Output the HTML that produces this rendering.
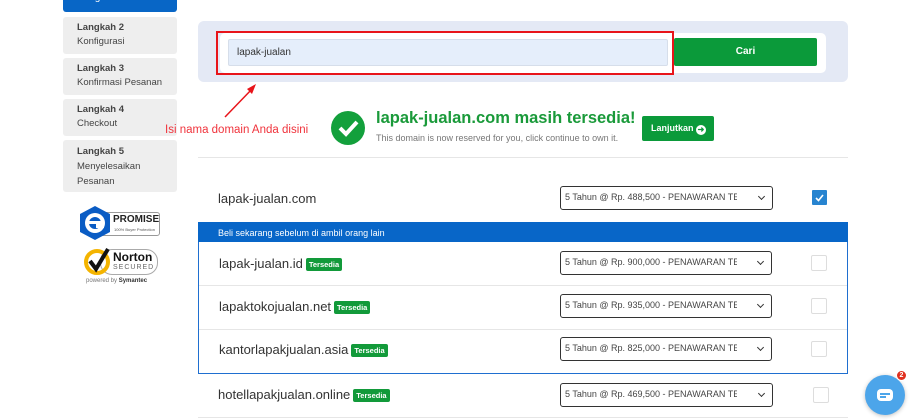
<!DOCTYPE html>
<html><head><meta charset="utf-8"><style>
*{box-sizing:border-box;margin:0;padding:0}
body{width:912px;height:420px;overflow:hidden;background:#fff;font-family:"Liberation Sans",sans-serif;position:relative;color:#333}
.a{position:absolute}
.step{position:absolute;left:63px;width:114px;background:#eee;border-radius:3px;padding:4px 14px;font-size:9.5px;line-height:15px;color:#444;white-space:nowrap}
.step b{color:#444}
.sel{position:absolute;left:560px;width:212px;height:24px;border:1.5px solid #333;border-radius:3px;font-size:9px;line-height:21px;padding-left:4px;color:#444;background:#fff;white-space:nowrap;overflow:hidden}
.sel span{display:inline-block;width:172px;overflow:hidden;vertical-align:top}
.sel:after{content:"";position:absolute;right:8px;top:7px;width:4px;height:4px;border-right:1.5px solid #333;border-bottom:1.5px solid #333;transform:rotate(45deg)}
.cb{position:absolute;width:16px;height:16px;border:1px solid #ddd;border-radius:2px;background:#fff}
.dn{position:absolute;left:219px;font-size:13px;color:#333}
.tag{display:inline-block;background:#129a3a;color:#fff;font-size:7.5px;font-weight:bold;padding:2px 3px;border-radius:2px;vertical-align:middle;margin-left:3px}
.sep{position:absolute;left:199px;width:648px;height:1px;background:#e6e6e6}
</style></head><body>
<div class="a" style="left:63px;top:0;width:114px;height:12px;background:#0866c6;border-radius:0 0 3px 3px;overflow:hidden"><span style="position:absolute;left:14px;top:-8px;color:#fff;font-size:10px">Pengaturan Domain</span></div>
<div class="step" style="top:17px;height:37px;line-height:14px"><b>Langkah 2</b><br>Konfigurasi</div>
<div class="step" style="top:58px;height:37px;line-height:14px"><b>Langkah 3</b><br>Konfirmasi Pesanan</div>
<div class="step" style="top:99px;height:37px;line-height:14px"><b>Langkah 4</b><br>Checkout</div>
<div class="step" style="top:140px;height:52px"><b>Langkah 5</b><br>Menyelesaikan<br>Pesanan</div>
<div class="a" style="left:100px;top:212px;width:60px;height:24px;border:1px solid #999;border-radius:3px;background:#fff"></div>
<div class="a" style="left:113px;top:214px;font-size:10px;font-weight:bold;color:#222">PROMISE</div>
<div class="a" style="left:114px;top:227px;font-size:4px;color:#555">100% Buyer Protection</div>
<svg class="a" style="left:79px;top:205px" width="32" height="36"><polygon points="16,1 31,9 31,27 16,35 1,27 1,9" fill="#0a5cc4"/><circle cx="16" cy="18" r="10" fill="#fff"/><circle cx="16" cy="18" r="6" fill="#0a5cc4"/><rect x="9" y="16" width="14" height="3" fill="#fff"/><rect x="17" y="19" width="8" height="4" fill="#fff"/></svg>
<div class="a" style="left:100px;top:249px;width:58px;height:26px;border:1px solid #aaa;border-radius:12px"></div>
<svg class="a" style="left:83px;top:245px" width="30" height="32"><circle cx="14" cy="17" r="11" fill="none" stroke="#f4b400" stroke-width="4"/><path d="M7 16 L13 24 L25 4" fill="none" stroke="#111" stroke-width="4"/></svg>
<div class="a" style="left:113px;top:250px;font-size:12px;font-weight:bold;color:#111">Norton</div>
<div class="a" style="left:113px;top:264px;font-size:7px;color:#666;letter-spacing:1px">SECURED</div>
<div class="a" style="left:86px;top:278px;font-size:6px;color:#777">powered by <b style="color:#333">Symantec</b></div>
<div class="a" style="left:198px;top:21px;width:650px;height:61px;background:#e4e9f5;border-radius:6px"></div>
<div class="a" style="left:220px;top:33px;width:606px;height:40px;background:#fff;border-radius:5px"></div>
<div class="a" style="left:228px;top:39px;width:440px;height:27px;background:#e5eefb;border:1px solid #d6deea;border-radius:2px;font-size:10px;line-height:25px;padding-left:8px;color:#333">lapak-jualan</div>
<div class="a" style="left:216px;top:31px;width:458px;height:44px;border:2px solid #e8141a"></div>
<div class="a" style="left:674px;top:38px;width:143px;height:28px;background:#0b9a3a;border-radius:2px;color:#fff;font-size:10px;font-weight:bold;text-align:center;line-height:28px">Cari</div>
<svg class="a" style="left:220px;top:80px" width="40" height="40"><line x1="5" y1="37" x2="33" y2="8" stroke="#e8141a" stroke-width="1.5"/><polygon points="36,4 27,9 32,14" fill="#e8141a"/></svg>
<div class="a" style="left:165px;top:124px;font-size:11.5px;color:#f0333c">Isi nama domain Anda disini</div>
<svg class="a" style="left:331px;top:111px" width="34" height="34"><circle cx="17" cy="17" r="17" fill="#13a03c"/><path d="M9 17 L15 23 L26 11" fill="none" stroke="#fff" stroke-width="4"/></svg>
<div class="a" style="left:376px;top:109px;font-size:16.5px;font-weight:bold;color:#1a9a3a;white-space:nowrap">lapak-jualan.com masih tersedia!</div>
<div class="a" style="left:376px;top:133px;font-size:9px;color:#777;white-space:nowrap">This domain is now reserved for you, click continue to own it.</div>
<div class="a" style="left:642px;top:116px;width:72px;height:25px;background:#0b9a3a;border-radius:2px;color:#fff;font-size:9px;font-weight:bold;line-height:25px;padding-left:9px;white-space:nowrap">Lanjutkan <span style="display:inline-block;width:10px;height:10px;border-radius:50%;background:#fff;color:#0b9a3a;font-size:8px;line-height:10px;text-align:center;vertical-align:-1px">➜</span></div>
<div class="sep" style="top:157px;left:198px;width:650px"></div>
<div class="dn" style="top:191px;left:218px">lapak-jualan.com</div>
<div class="sel" style="top:186px;width:213px"><span>5 Tahun @ Rp. 488,500 - PENAWARAN TERBAIK</span></div>
<div class="a" style="left:812px;top:190px;width:15px;height:15px;background:#2784d0;border-radius:1px"><svg width="15" height="15"><path d="M4 8 L6.5 10.5 L11 5" fill="none" stroke="#fff" stroke-width="1.6"/></svg></div>
<div class="a" style="left:198px;top:222px;width:650px;height:152px;border:1px solid #1f6fd0"></div>
<div class="a" style="left:198px;top:222px;width:650px;height:20px;background:#0866c8;color:#fff;font-size:9px;line-height:22px;padding-left:20px">Beli sekarang sebelum di ambil orang lain</div>
<div class="dn" style="top:256px">lapak-jualan.id<span class="tag">Tersedia</span></div>
<div class="sel" style="top:251px"><span>5 Tahun @ Rp. 900,000 - PENAWARAN TERBAIK</span></div>
<div class="cb" style="left:811px;top:255px"></div>
<div class="sep" style="top:285px"></div>
<div class="dn" style="top:299px">lapaktokojualan.net<span class="tag">Tersedia</span></div>
<div class="sel" style="top:294px"><span>5 Tahun @ Rp. 935,000 - PENAWARAN TERBAIK</span></div>
<div class="cb" style="left:811px;top:298px"></div>
<div class="sep" style="top:329px"></div>
<div class="dn" style="top:342px">kantorlapakjualan.asia<span class="tag">Tersedia</span></div>
<div class="sel" style="top:337px"><span>5 Tahun @ Rp. 825,000 - PENAWARAN TERBAIK</span></div>
<div class="cb" style="left:811px;top:341px"></div>
<div class="dn" style="top:387px;left:218px">hotellapakjualan.online<span class="tag">Tersedia</span></div>
<div class="sel" style="top:383px;width:213px"><span>5 Tahun @ Rp. 469,500 - PENAWARAN TERBAIK</span></div>
<div class="cb" style="left:813px;top:387px"></div>
<div class="sep" style="top:417px;left:198px;width:650px"></div>
<div class="a" style="left:865px;top:375px;width:40px;height:40px;border-radius:50%;background:#4ca5ea;box-shadow:0 1px 4px rgba(0,0,0,.25)"><div style="position:absolute;left:12px;top:14px;width:16px;height:12px;background:#fff;border-radius:4px"></div><div style="position:absolute;left:15px;top:18px;width:10px;height:1.5px;background:#4ca5ea"></div><div style="position:absolute;left:15px;top:21px;width:6px;height:1.5px;background:#4ca5ea"></div></div>
<div class="a" style="left:896px;top:370px;width:11px;height:11px;border-radius:50%;background:#e0301e;border:1px solid #fff;color:#fff;font-size:7px;line-height:9px;text-align:center;font-weight:bold">2</div>
</body></html>
